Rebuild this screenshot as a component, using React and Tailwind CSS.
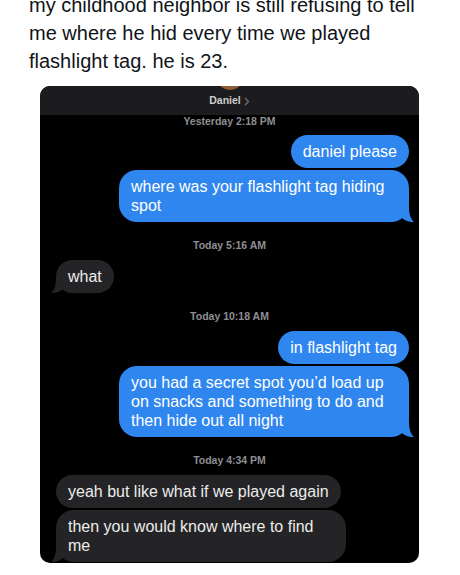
import React from 'react';

const messages = [
  { stamp: 'Yesterday 2:18 PM', first: true },
  { me: true, texts: ['daniel please', 'where was your flashlight tag hiding spot'] },
  { stamp: 'Today 5:16 AM' },
  { me: false, texts: ['what'] },
  { stamp: 'Today 10:18 AM' },
  {
    me: true,
    texts: [
      'in flashlight tag',
      "you had a secret spot you\u2019d load up on snacks and something to do and then hide out all night",
    ],
  },
  { stamp: 'Today 4:34 PM' },
  { me: false, texts: ['yeah but like what if we played again', 'then you would know where to find me'] },
];

function Tail({ me }) {
  return (
    <svg
      width="12"
      height="16"
      viewBox="0 0 12 16"
      className={
        me
          ? 'absolute right-[-5px] bottom-0 fill-[#2f86ef]'
          : 'absolute left-[-5px] bottom-0 fill-[#242426] -scale-x-100'
      }
    >
      <path d="M0 0 H7 C7 8 8.5 13 12 16 C7 16.3 3 14.8 0 12 Z" />
    </svg>
  );
}

function Bubble({ me, tail, children }) {
  return (
    <div
      className={`relative max-w-[290px] rounded-[18px] px-3 py-[7px] text-[16px] leading-[19px] ${
        me ? 'bg-[#2f86ef] text-white' : 'bg-[#242426] text-[#ececec]'
      }`}
    >
      {children}
      {tail && <Tail me={me} />}
    </div>
  );
}

function Stamp({ text, first }) {
  return (
    <div
      className={`text-center text-[10.5px] leading-[12px] font-bold text-[#8e8e93] ${
        first ? 'mt-0 mb-2' : 'mt-[17px] mb-[9px]'
      }`}
    >
      {text}
    </div>
  );
}

export default function App() {
  return (
    <div className="w-[460px] h-[575px] overflow-hidden bg-white font-['Liberation_Sans',Arial,sans-serif]">
      <p className="-mt-[9px] pl-[29px] pr-[20px] text-[20px] leading-[28px] text-[#0f1419]">
        my childhood neighbor is still refusing to tell me where he hid every time we played flashlight tag. he is 23.
      </p>

      <div className="ml-[40px] mt-[11px] w-[379px] h-[477px] rounded-[10px] bg-black overflow-hidden">
        <div className="relative h-[29px] bg-[#1c1c1e] flex items-center justify-center gap-[3px]">
          <div className="absolute top-[-22px] left-[177px] w-[26px] h-[26px] rounded-full bg-[#8a5c38]" />
          <span className="text-[10.5px] font-bold text-[#cfcfd1]">Daniel</span>
          <svg width="6" height="9" viewBox="0 0 6 9" className="mt-[1px]">
            <path d="M1 1 L4.5 4.5 L1 8" fill="none" stroke="#6e6e73" strokeWidth="1.3" />
          </svg>
        </div>

        {messages.map((m, i) =>
          m.stamp ? (
            <Stamp key={i} text={m.stamp} first={m.first} />
          ) : (
            <div
              key={i}
              className={`flex flex-col gap-[2px] ${m.me ? 'items-end pr-[10px]' : 'items-start pl-[16px]'}`}
            >
              {m.texts.map((t, j) => (
                <Bubble key={j} me={m.me} tail={j === m.texts.length - 1}>
                  {t}
                </Bubble>
              ))}
            </div>
          )
        )}
      </div>
    </div>
  );
}
